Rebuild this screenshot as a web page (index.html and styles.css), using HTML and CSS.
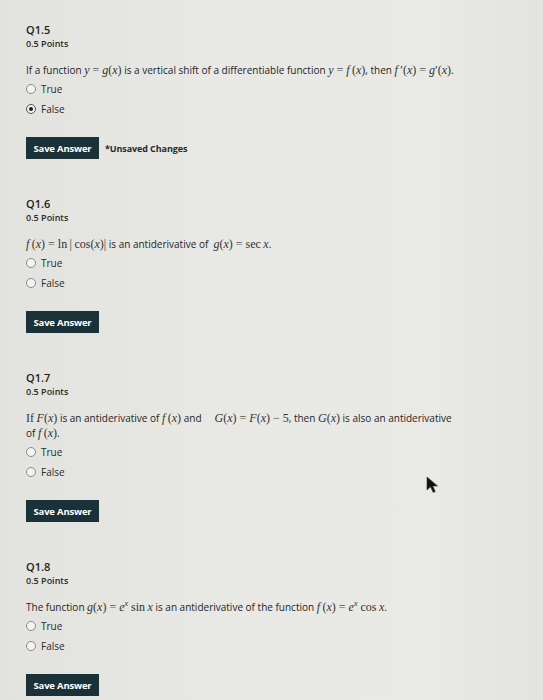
FILE: index.html
```html
<!DOCTYPE html>
<html>
<head>
<meta charset="utf-8">
<link rel="stylesheet" href="styles.css">
</head>
<body>
<div class="page">
  <section class="question">
    <div class="q-title">Q1.5</div>
    <div class="q-points">0.5 Points</div>
    <p class="q-text">If a function <span class="m"><i>y</i><span class="op">=</span><i>g</i>(<i>x</i>)</span> is a vertical shift of a differentiable function <span class="m"><i>y</i><span class="op">=</span><i>f</i>&thinsp;(<i>x</i>)</span>, then <span class="m"><i>f</i>&thinsp;′(<i>x</i>)<span class="op">=</span><i>g</i>′(<i>x</i>)</span>.</p>
    <div class="options">
      <label class="opt"><span class="radio"></span>True</label>
      <label class="opt"><span class="radio checked"></span>False</label>
    </div>
    <div class="actions">
      <button class="save">Save Answer</button>
      <span class="unsaved">*Unsaved Changes</span>
    </div>
  </section>

  <section class="question">
    <div class="q-title">Q1.6</div>
    <div class="q-points">0.5 Points</div>
    <p class="q-text"><span class="m"><i>f</i>&thinsp;(<i>x</i>)<span class="op">=</span>ln&thinsp;|&thinsp;cos(<i>x</i>)|</span> is an antiderivative of &nbsp;<span class="m"><i>g</i>(<i>x</i>)<span class="op">=</span>sec&thinsp;<i>x</i></span>.</p>
    <div class="options">
      <label class="opt"><span class="radio"></span>True</label>
      <label class="opt"><span class="radio"></span>False</label>
    </div>
    <div class="actions">
      <button class="save">Save Answer</button>
    </div>
  </section>

  <section class="question">
    <div class="q-title">Q1.7</div>
    <div class="q-points">0.5 Points</div>
    <p class="q-text"><span class="m">If</span> <span class="m"><i>F</i>(<i>x</i>)</span> is an antiderivative of <span class="m"><i>f</i>&thinsp;(<i>x</i>)</span> and &nbsp;&nbsp;&nbsp;&nbsp;<span class="m"><i>G</i>(<i>x</i>)<span class="op">=</span><i>F</i>(<i>x</i>)<span class="op">−</span>5</span>, then <span class="m"><i>G</i>(<i>x</i>)</span> is also an antiderivative of&nbsp;<span class="m"><i>f</i>&thinsp;(<i>x</i>)</span>.</p>
    <div class="options">
      <label class="opt"><span class="radio"></span>True</label>
      <label class="opt"><span class="radio"></span>False</label>
    </div>
    <div class="actions">
      <button class="save">Save Answer</button>
    </div>
  </section>

  <section class="question">
    <div class="q-title">Q1.8</div>
    <div class="q-points">0.5 Points</div>
    <p class="q-text">The function <span class="m"><i>g</i>(<i>x</i>)<span class="op">=</span><i>e</i><sup><i>x</i></sup> sin&thinsp;<i>x</i></span> is an antiderivative of the function <span class="m"><i>f</i>&thinsp;(<i>x</i>)<span class="op">=</span><i>e</i><sup><i>x</i></sup> cos&thinsp;<i>x</i></span>.</p>
    <div class="options">
      <label class="opt"><span class="radio"></span>True</label>
      <label class="opt"><span class="radio"></span>False</label>
    </div>
    <div class="actions">
      <button class="save">Save Answer</button>
    </div>
  </section>

  <svg class="cursor" width="14" height="18" viewBox="0 0 14 18">
    <path d="M1 1 L1 14 L4.5 10.8 L7.2 16.5 L9.3 15.5 L6.7 10 L11.5 10 Z" fill="#111" stroke="#333" stroke-width="0.6"/>
  </svg>
</div>
</body>
</html>
```

FILE: styles.css
```css
html, body {
  margin: 0;
  padding: 0;
}
body {
  background: #e6e6e3;
  font-family: "Open Sans", "Noto Sans", sans-serif;
  color: #222;
}
.page {
  position: relative;
  width: 543px;
  height: 700px;
  padding: 23px 0 0 26px;
  box-sizing: border-box;
  background: linear-gradient(90deg, #e2e2df 0%, #e8e8e5 40%, #e9e9e6 80%, #e3e3e0 100%);
  overflow: hidden;
}
.question {
  margin-bottom: 38px;
}
.q-title {
  font-size: 11px;
  line-height: 14px;
  font-weight: 600;
  color: #1e1e1e;
}
.q-points {
  font-size: 9px;
  line-height: 14px;
  font-weight: 600;
  color: #2a2a2a;
}
.q-text {
  margin: 12px 0 0 0;
  font-size: 10px;
  line-height: 15px;
  width: 450px;
  color: #1f1f1f;
}
.m {
  font-family: "Liberation Serif", "DejaVu Serif", serif;
  font-size: 12px;
  line-height: 1;
  color: #333;
  white-space: nowrap;
}
.op {
  font-style: normal;
  margin: 0 3px;
  color: #555;
}
.m sup {
  font-size: 8px;
  line-height: 0;
}
.options {
  margin-top: 1px;
}
.opt {
  display: flex;
  align-items: center;
  height: 20px;
  font-size: 10px;
  color: #2a2a2a;
}
.radio {
  width: 8px;
  height: 8px;
  border: 1px solid #8a8a8a;
  border-radius: 50%;
  background: #f4f4f2;
  margin-right: 5px;
  box-sizing: content-box;
  position: relative;
}
.radio.checked {
  border-color: #555;
}
.radio.checked::after {
  content: "";
  position: absolute;
  left: 2px;
  top: 2px;
  width: 4px;
  height: 4px;
  border-radius: 50%;
  background: #1a1a1a;
}
.actions {
  margin-top: 18px;
  display: flex;
  align-items: center;
  gap: 6px;
}
.save {
  height: 22px;
  width: 73px;
  padding: 0;
  border: none;
  background: #1b3138;
  color: #fff;
  font-family: "Open Sans", "Noto Sans", sans-serif;
  font-size: 9.5px;
  font-weight: 700;
  letter-spacing: -0.2px;
}
.unsaved {
  font-size: 9px;
  font-weight: 700;
  color: #2a2a2a;
  letter-spacing: -0.1px;
}
.cursor {
  position: absolute;
  left: 426px;
  top: 476px;
}
```
